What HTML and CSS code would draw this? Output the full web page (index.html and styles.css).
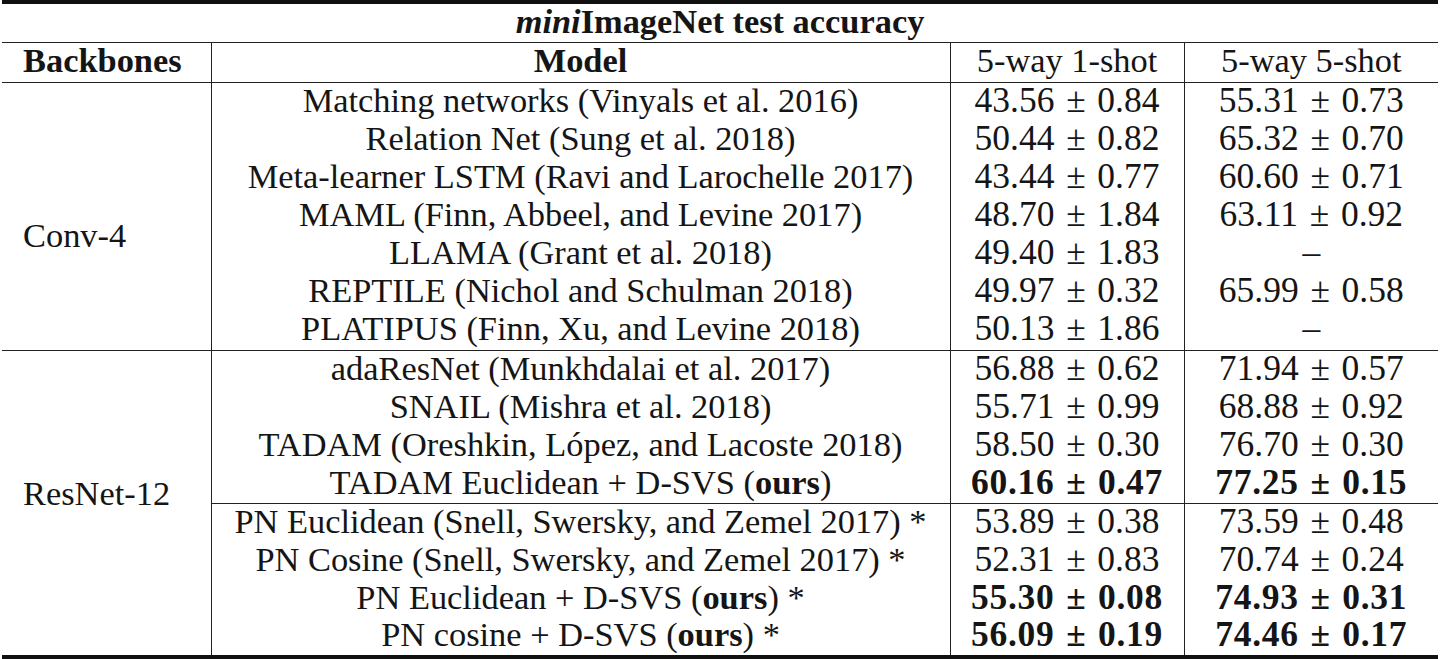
FILE: index.html
```html
<!DOCTYPE html>
<html lang="en">
<head>
<meta charset="utf-8">
<title>miniImageNet test accuracy</title>
<link rel="stylesheet" href="styles.css">
</head>
<body>
<table class="results">
  <colgroup>
    <col class="c-backbone">
    <col class="c-model">
    <col class="c-one">
    <col class="c-five">
  </colgroup>
  <thead>
    <tr class="title-row">
      <th colspan="4"><i>mini</i>ImageNet test accuracy</th>
    </tr>
    <tr class="head-row">
      <th class="backbone-head">Backbones</th>
      <th class="model-head">Model</th>
      <th class="shot-head">5-way 1-shot</th>
      <th class="shot-head">5-way 5-shot</th>
    </tr>
  </thead>
  <tbody class="group">
    <tr>
      <td rowspan="7" class="backbone conv">Conv-4</td>
      <td class="model">Matching networks (Vinyals et al. 2016)</td>
      <td class="num">43.56<span class="pm">±</span>0.84</td>
      <td class="num">55.31<span class="pm">±</span>0.73</td>
    </tr>
    <tr>
      <td class="model">Relation Net (Sung et al. 2018)</td>
      <td class="num">50.44<span class="pm">±</span>0.82</td>
      <td class="num">65.32<span class="pm">±</span>0.70</td>
    </tr>
    <tr>
      <td class="model">Meta-learner LSTM (Ravi and Larochelle 2017)</td>
      <td class="num">43.44<span class="pm">±</span>0.77</td>
      <td class="num">60.60<span class="pm">±</span>0.71</td>
    </tr>
    <tr>
      <td class="model">MAML (Finn, Abbeel, and Levine 2017)</td>
      <td class="num">48.70<span class="pm">±</span>1.84</td>
      <td class="num">63.11<span class="pm">±</span>0.92</td>
    </tr>
    <tr>
      <td class="model">LLAMA (Grant et al. 2018)</td>
      <td class="num">49.40<span class="pm">±</span>1.83</td>
      <td class="num dash">–</td>
    </tr>
    <tr>
      <td class="model">REPTILE (Nichol and Schulman 2018)</td>
      <td class="num">49.97<span class="pm">±</span>0.32</td>
      <td class="num">65.99<span class="pm">±</span>0.58</td>
    </tr>
    <tr class="last">
      <td class="model">PLATIPUS (Finn, Xu, and Levine 2018)</td>
      <td class="num">50.13<span class="pm">±</span>1.86</td>
      <td class="num dash">–</td>
    </tr>
  </tbody>
  <tbody class="group">
    <tr>
      <td rowspan="8" class="backbone resnet">ResNet-12</td>
      <td class="model">adaResNet (Munkhdalai et al. 2017)</td>
      <td class="num">56.88<span class="pm">±</span>0.62</td>
      <td class="num">71.94<span class="pm">±</span>0.57</td>
    </tr>
    <tr>
      <td class="model">SNAIL (Mishra et al. 2018)</td>
      <td class="num">55.71<span class="pm">±</span>0.99</td>
      <td class="num">68.88<span class="pm">±</span>0.92</td>
    </tr>
    <tr>
      <td class="model">TADAM (Oreshkin, López, and Lacoste 2018)</td>
      <td class="num">58.50<span class="pm">±</span>0.30</td>
      <td class="num">76.70<span class="pm">±</span>0.30</td>
    </tr>
    <tr>
      <td class="model">TADAM Euclidean + D-SVS (<b>ours</b>)</td>
      <td class="num best">60.16<span class="pm">±</span>0.47</td>
      <td class="num best">77.25<span class="pm">±</span>0.15</td>
    </tr>
    <tr class="cline">
      <td class="model">PN Euclidean (Snell, Swersky, and Zemel 2017) *</td>
      <td class="num">53.89<span class="pm">±</span>0.38</td>
      <td class="num">73.59<span class="pm">±</span>0.48</td>
    </tr>
    <tr>
      <td class="model">PN Cosine (Snell, Swersky, and Zemel 2017) *</td>
      <td class="num">52.31<span class="pm">±</span>0.83</td>
      <td class="num">70.74<span class="pm">±</span>0.24</td>
    </tr>
    <tr>
      <td class="model">PN Euclidean + D-SVS (<b>ours</b>) *</td>
      <td class="num best">55.30<span class="pm">±</span>0.08</td>
      <td class="num best">74.93<span class="pm">±</span>0.31</td>
    </tr>
    <tr class="final">
      <td class="model">PN cosine + D-SVS (<b>ours</b>) *</td>
      <td class="num best">56.09<span class="pm">±</span>0.19</td>
      <td class="num best">74.46<span class="pm">±</span>0.17</td>
    </tr>
  </tbody>
</table>
</body>
</html>
```
FILE: styles.css
```css
html, body {
  margin: 0;
  padding: 0;
  background: #ffffff;
}

body {
  font-family: "Liberation Serif", "Times New Roman", serif;
  color: #151515;
}

.results {
  border-collapse: collapse;
  table-layout: fixed;
  width: 1436px;
  margin-left: 2px;
  font-size: 34.4px;
  line-height: 28px;
}

.c-backbone { width: 209px; }
.c-model { width: 739px; }
.c-one { width: 234px; }
.c-five { width: 254px; }

.results th,
.results td {
  padding: 0 0 5px 0;
  text-align: center;
  vertical-align: middle;
  white-space: nowrap;
}

.title-row th {
  border-top: 4px solid #111;
  border-bottom: 1px solid #222;
  height: 33px;
  font-weight: bold;
}

.title-row i {
  font-style: italic;
}

.head-row th {
  border-bottom: 1px solid #222;
  height: 34px;
  font-weight: bold;
}

.head-row .shot-head {
  font-weight: normal;
}

.head-row th + th,
.results td.model,
.results td.num {
  border-left: 1px solid #222;
}

.results td {
  height: 33px;
}

.group + .group tr:first-child td {
  border-top: 1px solid #222;
}

.last td {
  height: 34px;
}

.final td {
  height: 32px;
  border-bottom: 4px solid #111;
}

.results th.backbone-head,
.results td.backbone {
  text-align: left;
  padding-left: 21px;
}

.results td.conv {
  padding-top: 36px;
  padding-bottom: 0;
}

.results td.resnet {
  padding-top: 0;
  padding-bottom: 21px;
  border-bottom: 4px solid #111;
}

.cline td {
  border-top: 1px solid #222;
}

.num {
  font-size: 35.5px;
}

.pm {
  margin: 0 0.33em;
}

.best {
  font-weight: bold;
  letter-spacing: 0.02em;
}
```
